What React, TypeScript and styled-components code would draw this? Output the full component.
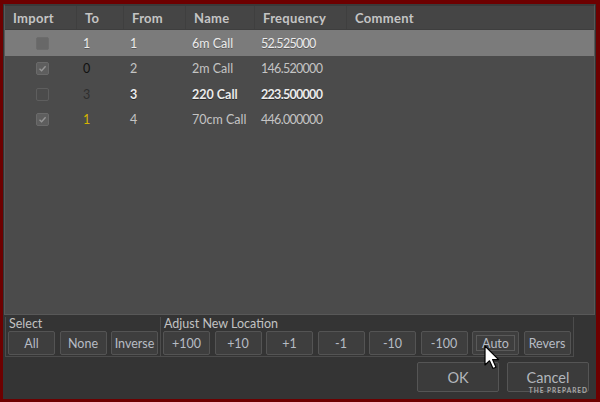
import styled, { createGlobalStyle, css } from "styled-components";

const GlobalStyle = createGlobalStyle`
  html, body {
    margin: 0;
    padding: 0;
    background: #6d0000;
  }
  * {
    box-sizing: border-box;
  }
`;

const FONT = `Lato, "Open Sans", "DejaVu Sans", sans-serif`;

const Frame = styled.div`
  position: relative;
  width: 600px;
  height: 402px;
  padding: 4px 4px 3px 3px;
  background: #6d0000;
  font-family: ${FONT};
`;

const Dialog = styled.div`
  display: flex;
  flex-direction: column;
  height: 100%;
  background: #343434;
  padding: 0 1px;
`;

const TablePanel = styled.div`
  height: 311px;
  background: #4b4b4b;
  border: 1px solid #585858;
  border-top: 2px solid #3a3a3a;
  display: flex;
  flex-direction: column;
`;

const COLS = "72px 47px 62px 69px 92px 1fr";

const HeaderRow = styled.div`
  display: grid;
  grid-template-columns: ${COLS};
  height: 24px;
  background: #454545;
  border-bottom: 1px solid #3e3e3e;
`;

const HeaderCell = styled.div`
  display: flex;
  align-items: center;
  padding-left: 8px;
  font-size: 13px;
  font-weight: 700;
  color: #c4c4c4;
  letter-spacing: 0.3px;
  border-right: 1px solid #3f3f3f;
  &:last-child {
    border-right: none;
  }
`;

const Row = styled.div<{ $selected?: boolean }>`
  display: grid;
  grid-template-columns: ${COLS};
  height: 25.5px;
  padding-top: 1px;
  background: ${(p) => (p.$selected ? "#7b7b7b" : "transparent")};
`;

type Tone = "normal" | "bright" | "bold";

const Cell = styled.div<{ $tone?: Tone; $color?: string; $center?: boolean; $digits?: boolean }>`
  display: flex;
  align-items: center;
  justify-content: ${(p) => (p.$center ? "center" : "flex-start")};
  padding-left: ${(p) => (p.$center ? "0" : "6px")};
  font-size: 12.5px;
  letter-spacing: ${(p) => (p.$digits ? "-0.7px" : "0")};
  color: ${(p) => p.$color ?? (p.$tone === "normal" || !p.$tone ? "#c4c4c4" : "#ececec")};
  ${(p) =>
    p.$tone === "bright" &&
    css`
      text-shadow: 0 1px 0 #5a5a5a;
    `}
  ${(p) =>
    p.$tone === "bold" &&
    css`
      font-weight: 700;
      text-shadow: 0 1px 0 #2a2a2a;
    `}
`;

const Check = styled.div<{ $checked?: boolean; $filled?: boolean }>`
  width: 13px;
  height: 13px;
  margin-left: 3px;
  border: 1px solid ${(p) => (p.$filled ? "#6c6c6c" : p.$checked ? "#6a6a6a" : "#5e5e5e")};
  border-radius: 2px;
  background: ${(p) => (p.$filled ? "#686868" : p.$checked ? "#5e5e5e" : "transparent")};
  display: flex;
  align-items: center;
  justify-content: center;
`;

const Bottom = styled.div`
  position: relative;
  flex: 1;
  display: flex;
  flex-direction: column;
`;

const Groups = styled.div`
  display: flex;
  padding-left: 1px;
  margin-top: 2px;
`;

const Group = styled.div<{ $right?: boolean }>`
  display: flex;
  flex-direction: column;
  border-left: 1px solid #4c4c4c;
  border-bottom: 1px solid #4c4c4c;
  ${(p) =>
    p.$right &&
    css`
      border-right: 1px solid #4c4c4c;
    `}
  padding: 0 2px 1px 2px;
`;

const GroupLabel = styled.div`
  font-size: 12.5px;
  color: #c2c2c2;
  height: 15px;
  line-height: 14px;
  padding-left: 1px;
  margin-bottom: -1px;
`;

const ButtonRow = styled.div`
  display: flex;
  gap: 4.5px;
  height: 24px;
`;

const SmallButton = styled.div<{ $focus?: boolean }>`
  position: relative;
  width: 47px;
  height: 24px;
  background: #3e3e3e;
  border: 1px solid #545454;
  border-radius: 2px;
  color: #b7bcc4;
  font-size: 12.5px;
  display: flex;
  align-items: center;
  justify-content: center;
  white-space: nowrap;
  overflow: hidden;
  ${(p) =>
    p.$focus &&
    css`
      &::after {
        content: "";
        position: absolute;
        inset: 3px;
        border: 1px solid #5a5a5a;
      }
    `}
`;

const ActionRow = styled.div`
  display: flex;
  justify-content: flex-end;
  gap: 8px;
  padding-right: 6px;
  margin-top: 5px;
`;

const BigButton = styled.div`
  width: 82px;
  height: 30px;
  background: #3b3b3b;
  border: 1px solid #555;
  border-radius: 2px;
  color: #b2b6bc;
  font-size: 14.5px;
  display: flex;
  align-items: center;
  justify-content: center;
`;

const Watermark = styled.div`
  position: absolute;
  right: 7px;
  bottom: 5px;
  font-family: ${FONT};
  font-size: 6.5px;
  font-weight: 700;
  letter-spacing: 1px;
  line-height: 7px;
  color: #a8a8a8;
`;

const Cursor = styled.svg`
  position: absolute;
  left: 484px;
  top: 345px;
`;

const CheckMark = () => (
  <svg width="9" height="9" viewBox="0 0 9 9">
    <path d="M1.5 4.8 L3.6 6.8 L7.6 2.2" stroke="#969696" strokeWidth="1.4" fill="none" />
  </svg>
);

const rows: {
  checked: boolean;
  filled?: boolean;
  to: string;
  toColor: string;
  from: string;
  name: string;
  freq: string;
  tone: Tone;
  selected?: boolean;
}[] = [
  { checked: false, filled: true, to: "1", toColor: "#ececec", from: "1", name: "6m Call", freq: "52.525000", tone: "bright", selected: true },
  { checked: true, to: "0", toColor: "#111", from: "2", name: "2m Call", freq: "146.520000", tone: "normal" },
  { checked: false, to: "3", toColor: "#2e2e2e", from: "3", name: "220 Call", freq: "223.500000", tone: "bold" },
  { checked: true, to: "1", toColor: "#d6b400", from: "4", name: "70cm Call", freq: "446.000000", tone: "normal" },
];

export default function App() {
  return (
    <>
      <GlobalStyle />
      <Frame>
        <Dialog>
          <TablePanel>
            <HeaderRow>
              {["Import", "To", "From", "Name", "Frequency", "Comment"].map((h) => (
                <HeaderCell key={h}>{h}</HeaderCell>
              ))}
            </HeaderRow>
            {rows.map((r) => (
              <Row key={r.from} $selected={r.selected}>
                <Cell $center>
                  <Check $checked={r.checked} $filled={r.filled}>
                    {r.checked && <CheckMark />}
                  </Check>
                </Cell>
                <Cell $color={r.toColor} $tone={r.tone === "bold" ? "normal" : r.tone}>
                  {r.to}
                </Cell>
                <Cell $tone={r.tone}>{r.from}</Cell>
                <Cell $tone={r.tone}>{r.name}</Cell>
                <Cell $tone={r.tone} $digits>
                  {r.freq}
                </Cell>
                <Cell />
              </Row>
            ))}
          </TablePanel>
          <Bottom>
            <Groups>
              <Group>
                <GroupLabel>Select</GroupLabel>
                <ButtonRow>
                  <SmallButton>All</SmallButton>
                  <SmallButton>None</SmallButton>
                  <SmallButton>Inverse</SmallButton>
                </ButtonRow>
              </Group>
              <Group $right>
                <GroupLabel>Adjust New Location</GroupLabel>
                <ButtonRow>
                  {["+100", "+10", "+1", "-1", "-10", "-100"].map((b) => (
                    <SmallButton key={b}>{b}</SmallButton>
                  ))}
                  <SmallButton $focus>Auto</SmallButton>
                  <SmallButton>Revers</SmallButton>
                </ButtonRow>
              </Group>
            </Groups>
            <ActionRow>
              <BigButton>OK</BigButton>
              <BigButton>Cancel</BigButton>
            </ActionRow>
            <Watermark>THE PREPARED</Watermark>
          </Bottom>
        </Dialog>
        <Cursor width="17" height="26" viewBox="0 0 17 26">
          <path
            d="M1 1 L1 20 L5.5 15.8 L9 23.5 L12 22.2 L8.6 14.6 L14.6 14.6 Z"
            fill="#fff"
            stroke="#000"
            strokeWidth="1.2"
            strokeLinejoin="round"
          />
        </Cursor>
      </Frame>
    </>
  );
}
